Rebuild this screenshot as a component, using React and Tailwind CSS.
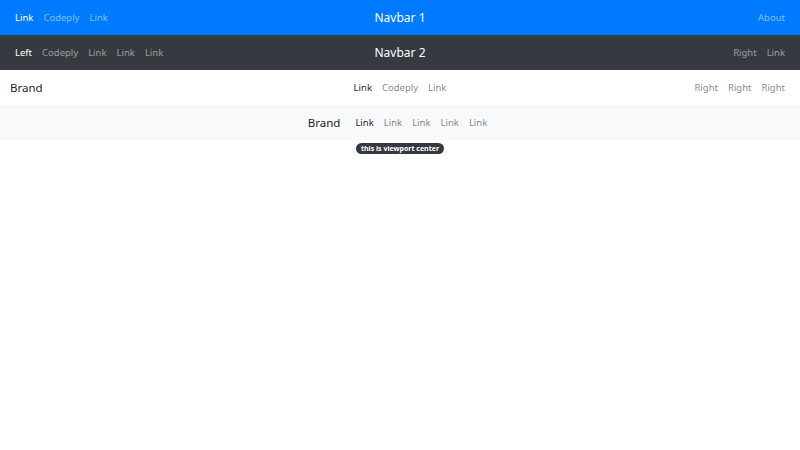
export default function App() {
  const font = { fontFamily: '"Noto Sans", "Open Sans", sans-serif' };
  const lk = "px-[5px] text-[9.5px] leading-[15px]";
  const br = "text-[11.5px] text-black/90 leading-[19px]";
  return (
    <div className="w-[800px] h-[450px] bg-white" style={font}>
      <nav className="h-[35px] bg-[#007bff] px-[10px] flex items-center">
        <div className="flex-1 flex">
          <span className={`${lk} text-white`}>Link</span>
          <span className={`${lk} text-white/50`}>Codeply</span>
          <span className={`${lk} text-white/50`}>Link</span>
        </div>
        <div className="text-[12px] text-white leading-[19px]">Navbar 1</div>
        <div className="flex-1 flex justify-end">
          <span className={`${lk} text-white/50`}>About</span>
        </div>
      </nav>
      <nav className="h-[35px] bg-[#343a40] px-[10px] flex items-center">
        <div className="flex-1 flex">
          <span className={`${lk} text-white`}>Left</span>
          <span className={`${lk} text-white/50`}>Codeply</span>
          <span className={`${lk} text-white/50`}>Link</span>
          <span className={`${lk} text-white/50`}>Link</span>
          <span className={`${lk} text-white/50`}>Link</span>
        </div>
        <div className="text-[12px] text-white leading-[19px]">Navbar 2</div>
        <div className="flex-1 flex justify-end">
          <span className={`${lk} text-white/50`}>Right</span>
          <span className={`${lk} text-white/50`}>Link</span>
        </div>
      </nav>
      <nav className="h-[35px] bg-white px-[10px] flex items-center">
        <div className="flex-1 flex">
          <span className={br}>Brand</span>
        </div>
        <div className="flex">
          <span className={`${lk} text-black/90`}>Link</span>
          <span className={`${lk} text-black/50`}>Codeply</span>
          <span className={`${lk} text-black/50`}>Link</span>
        </div>
        <div className="flex-1 flex justify-end">
          <span className={`${lk} text-black/50`}>Right</span>
          <span className={`${lk} text-black/50`}>Right</span>
          <span className={`${lk} text-black/50`}>Right</span>
        </div>
      </nav>
      <nav className="h-[35px] bg-[#f8f9fa] px-[10px] flex items-center justify-center">
        <span className={`${br} mr-[10px]`}>Brand</span>
        <span className={`${lk} text-black/90`}>Link</span>
        <span className={`${lk} text-black/50`}>Link</span>
        <span className={`${lk} text-black/50`}>Link</span>
        <span className={`${lk} text-black/50`}>Link</span>
        <span className={`${lk} text-black/50`}>Link</span>
      </nav>
      <div className="flex justify-center pt-[3px]">
        <span className="bg-[#343a40] text-white font-bold text-[7px] leading-[11px] px-[5px] rounded-full">
          this is viewport center
        </span>
      </div>
    </div>
  );
}
